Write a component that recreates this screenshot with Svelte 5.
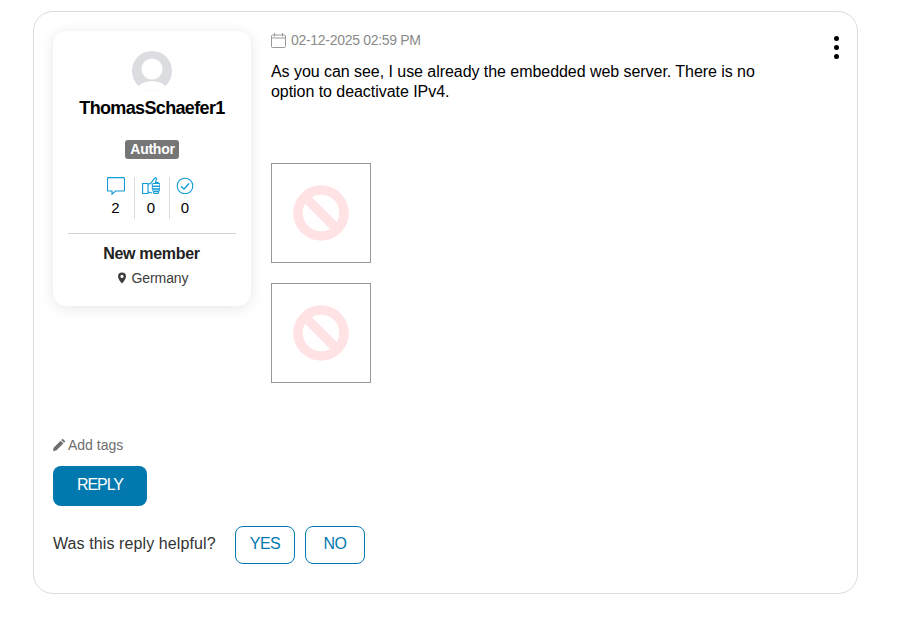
<script>
  const stats = [
    { id: 'posts', n: 2 },
    { id: 'kudos', n: 0 },
    { id: 'solved', n: 0 }
  ];
</script>

<div class="page">
  <article class="post">
    <div class="top">
      <aside class="profile">
        <svg class="avatar" viewBox="0 0 40 40" width="40" height="40" aria-hidden="true">
          <defs><clipPath id="av"><circle cx="20" cy="20" r="20" /></clipPath></defs>
          <circle cx="20" cy="20" r="20" fill="#dcdde1" />
          <g clip-path="url(#av)">
            <circle cx="20" cy="18" r="10.5" fill="#fff" />
            <ellipse cx="20" cy="39" rx="15" ry="9" fill="#fff" />
          </g>
        </svg>
        <div class="name">ThomasSchaefer1</div>
        <span class="badge">Author</span>
        <div class="stats">
          {#each stats as s}
            <div class="stat">
              {#if s.id === 'posts'}
                <svg viewBox="0 0 18 18" width="18" height="18" fill="none" stroke="#0d9ad8" stroke-width="1.1" aria-hidden="true">
                  <path d="M1.300.6h15.400a.8.8 0 0 1 .8.8v11.800a.8.8 0 0 1-.8.8H8.500l-3.500 3.200V14H1.300a.8.8 0 0 1-.8-.8V1.400a.8.8 0 0 1 .8-.8z" />
                </svg>
              {:else if s.id === 'kudos'}
                <svg viewBox="0 0 18 18" width="18" height="18" fill="none" stroke="#0d9ad8" stroke-width="1.1" aria-hidden="true">
                  <path d="M.6 6.500h5.400v10H.6z" />
                  <path d="M6 7.500 9 6l2.500-3.300L13.300.6l1.200 1-1 3.900h3.300" />
                  <path d="M6 15l4 1" />
                  <path d="M11.500 6.500h5.200a1.200 1.200 0 0 1 0 2.800h-5.200a1.400 1.400 0 0 1 0-2.800z" />
                  <path d="M11.500 9.300h5.200a1.200 1.200 0 0 1 0 2.700h-5.200a1.300 1.300 0 0 1 0-2.700z" />
                  <path d="M12 12h4.200a1.100 1.100 0 0 1 0 2.300H12a1.100 1.100 0 0 1 0-2.300z" />
                  <path d="M12.500 14.300h3.200a1 1 0 0 1 0 2.100h-3.200a1 1 0 0 1 0-2.100z" />
                </svg>
              {:else}
                <svg viewBox="0 0 18 18" width="18" height="18" fill="none" stroke="#0d9ad8" stroke-width="1.1" aria-hidden="true">
                  <circle cx="9" cy="9" r="7.800" />
                  <path d="M5 9.200 8 12l5-5.500" stroke-width="1.300" />
                </svg>
              {/if}
              <span>{s.n}</span>
            </div>
          {/each}
        </div>
        <div class="rank">New member</div>
        <div class="loc">
          <svg viewBox="0 0 10 14" width="8" height="12" aria-hidden="true">
            <path fill-rule="evenodd" fill="#3c3c3c" d="M5 0a5 5 0 0 1 5 5c0 2.800-3 6.500-5 9-2-2.500-5-6.200-5-9a5 5 0 0 1 5-5zm0 3a2 2 0 1 0 0 4 2 2 0 0 0 0-4z" />
          </svg>
          Germany
        </div>
      </aside>

      <div class="content">
        <div class="date">
          <svg viewBox="0 0 15 15" width="15" height="15" fill="none" stroke="#9a9a9a" stroke-width="1" aria-hidden="true">
            <rect x="0.500" y="2" width="14" height="12.500" rx="1" />
            <path d="M.5 5h14M3.500 0v3.500M11.500 0v3.500" />
          </svg>
          <span>02-12-2025 02:59 PM</span>
        </div>
        <p class="body">As you can see, I use already the embedded web server. There is no option to deactivate IPv4.</p>
        <div class="images">
          {#each [1, 2] as i}
            <div class="broken">
              <svg viewBox="0 0 56 56" width="56" height="56" fill="none" stroke="#ffe3e4" stroke-width="9.500" aria-hidden="true">
                <circle cx="28" cy="28" r="23" />
                <path d="M12 12l32 32" />
              </svg>
            </div>
          {/each}
        </div>
      </div>

      <button class="more" aria-label="More options"><i></i><i></i><i></i></button>
    </div>

    <div class="tags">
      <svg viewBox="0 0 12 12" width="12" height="12" aria-hidden="true">
        <path fill="#6e6e6e" d="M0 12l.6-3.300L7.600 1.700l2.800 2.800-7.100 7zM8.300 1l.8-.8a.8.8 0 0 1 1.100 0l1.600 1.600a.8.8 0 0 1 0 1.100l-.8.800z" />
      </svg>
      Add tags
    </div>
    <button class="reply">REPLY</button>
    <div class="helpful">
      <span>Was this reply helpful?</span>
      <button class="opt">YES</button>
      <button class="opt">NO</button>
    </div>
  </article>
</div>

<style>
  :global(body) {
    margin: 0;
    background: #fff;
  }
  .page {
    padding: 11px 59px 25px 33px;
    font-family: "Liberation Sans", Arimo, sans-serif;
    color: #000;
  }
  .post {
    box-sizing: border-box;
    height: 583px;
    border: 1px solid #dcdcdc;
    border-radius: 20px;
    padding: 19px 19px 0;
  }
  .top {
    display: flex;
    align-items: flex-start;
    height: 405px;
  }
  .profile {
    box-sizing: border-box;
    width: 198px;
    height: 275px;
    flex: none;
    border-radius: 14px;
    box-shadow: 0 2px 14px rgba(0, 0, 0, 0.1);
    padding: 20px 15px 0;
    display: flex;
    flex-direction: column;
    align-items: center;
  }
  .avatar {
    display: block;
  }
  .name {
    margin-top: 5px;
    font-size: 18px;
    line-height: 24px;
    font-weight: 700;
    letter-spacing: -0.65px;
  }
  .badge {
    margin-top: 20px;
    height: 19px;
    line-height: 19px;
    padding: 0 4px 0 5px;
    border-radius: 3px;
    background: #767676;
    color: #fff;
    font-size: 14px;
    font-weight: 700;
    letter-spacing: -0.25px;
  }
  .stats {
    display: flex;
    margin-top: 18px;
    align-self: stretch;
    padding: 0 0 14px 30px;
    border-bottom: 1px solid #d4d4d4;
  }
  .stat {
    width: 35px;
    margin-right: 1px;
    height: 42px;
    display: flex;
    flex-direction: column;
    align-items: center;
    gap: 2px;
    font-size: 15px;
    line-height: 21px;
  }
  .stat + .stat {
    width: 32px;
    margin-right: 2px;
    border-left: 1px solid #dcdcdc;
  }
  .stat:last-child {
    width: 30px;
  }
  .rank {
    margin-top: 9px;
    margin-right: 1px;
    font-size: 16px;
    line-height: 22px;
    font-weight: 700;
    color: #222;
    letter-spacing: -0.3px;
  }
  .loc {
    margin-top: 3px;
    margin-left: 2px;
    display: flex;
    align-items: center;
    gap: 6px;
    font-size: 14px;
    line-height: 20px;
    letter-spacing: -0.1px;
    color: #3c3c3c;
  }
  .content {
    margin-left: 20px;
    width: 510px;
    flex: none;
  }
  .date {
    display: flex;
    align-items: center;
    gap: 5px;
    height: 18px;
    font-size: 14px;
    letter-spacing: -0.3px;
    color: #8a8a8a;
  }
  .body {
    margin: 13px 0 0;
    font-size: 16px;
    line-height: 20px;
    letter-spacing: -0.05px;
  }
  .images {
    margin-top: 61px;
    display: flex;
    flex-direction: column;
    gap: 20px;
  }
  .broken {
    box-sizing: border-box;
    width: 100px;
    height: 100px;
    border: 1px solid #999;
    display: flex;
    align-items: center;
    justify-content: center;
  }
  .more {
    margin: 5px -1px 0 auto;
    padding: 0;
    border: 0;
    background: none;
    display: flex;
    flex-direction: column;
    gap: 4px;
  }
  .more i {
    display: block;
    width: 5px;
    height: 5px;
    border-radius: 50%;
    background: #000;
  }
  .tags {
    display: flex;
    align-items: center;
    gap: 3px;
    font-size: 14px;
    line-height: 18px;
    color: #6e6e6e;
  }
  .reply {
    display: block;
    margin-top: 12px;
    padding: 0 0 3px;
    width: 94px;
    height: 40px;
    border: 0;
    border-radius: 8px;
    background: #0279ae;
    color: #fff;
    font: inherit;
    font-size: 16px;
    letter-spacing: -1.1px;
  }
  .helpful {
    margin-top: 20px;
    display: flex;
    align-items: center;
    font-size: 16px;
    color: #333;
  }
  .helpful span {
    width: 182px;
    white-space: nowrap;
    margin-bottom: 2px;
    letter-spacing: 0.1px;
  }
  .opt {
    width: 60px;
    height: 38px;
    margin-right: 10px;
    padding: 0 0 2px;
    border: 1px solid #0279ae;
    border-radius: 8px;
    background: #fff;
    color: #0279ae;
    font: inherit;
    font-size: 16px;
    letter-spacing: -0.5px;
  }
</style>
